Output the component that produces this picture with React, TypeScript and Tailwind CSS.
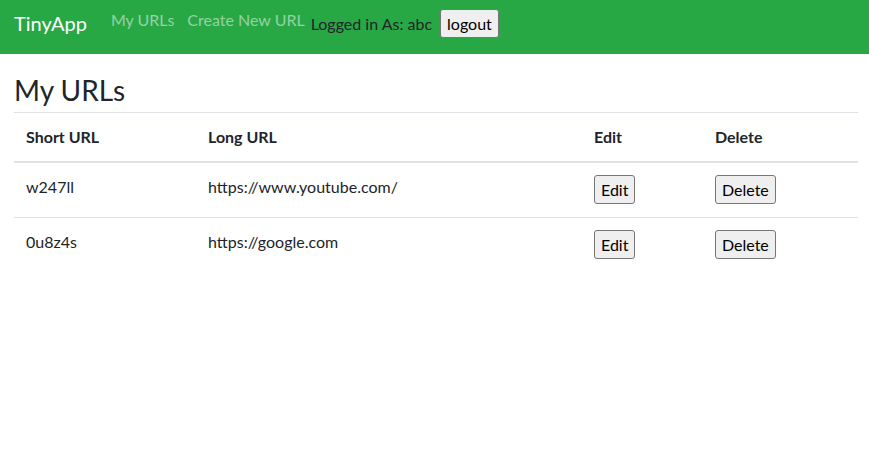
import React from "react";

const rows = [
  { short: "w247ll", long: "https://www.youtube.com/" },
  { short: "0u8z4s", long: "https://google.com" },
];

function Btn({ children }: { children: React.ReactNode }) {
  return (
    <button className="h-[29px] bg-[#efefef] border border-[#767676] rounded-[3px] px-[6px] text-base leading-6 text-black">
      {children}
    </button>
  );
}

export default function App() {
  return (
    <div className="min-h-[476px] bg-white text-[#212529] font-['Lato','Open_Sans',sans-serif] text-base">
      <nav className="h-[54px] bg-[#28a745] flex items-start pl-[14px]">
        <span className="text-[20px] leading-[30px] mt-[8px] text-white mr-[24px]">TinyApp</span>
        <a className="text-base leading-6 mt-[8px] text-white/50 mr-[13px]">My URLs</a>
        <a className="text-base leading-6 mt-[8px] text-white/50 mr-[6px]">Create New URL</a>
        <span className="text-base leading-6 mt-[12px] text-[#212529] mr-[8px]">Logged in As: abc</span>
        <div className="mt-[9px]">
          <Btn>logout</Btn>
        </div>
      </nav>
      <div className="pl-[14px] pr-[11px]">
        <h2 className="text-[28px] leading-[36px] mt-[18px] mb-[4px] font-normal">My URLs</h2>
        <table className="w-[844px] border-collapse text-left">
          <thead>
            <tr className="border-t border-[#dee2e6]">
              <th className="w-[182px] px-3 py-3 font-bold leading-6 align-bottom border-b-2 border-[#dee2e6]">Short URL</th>
              <th className="w-[386px] px-3 py-3 font-bold leading-6 align-bottom border-b-2 border-[#dee2e6]">Long URL</th>
              <th className="w-[121px] px-3 py-3 font-bold leading-6 align-bottom border-b-2 border-[#dee2e6]">Edit</th>
              <th className="px-3 py-3 font-bold leading-6 align-bottom border-b-2 border-[#dee2e6]">Delete</th>
            </tr>
          </thead>
          <tbody>
            {rows.map((r) => (
              <tr key={r.short} className="border-b border-[#dee2e6] last:border-b-0">
                <td className="px-3 pt-3 pb-[13px] align-top leading-6">{r.short}</td>
                <td className="px-3 pt-3 pb-[13px] align-top leading-6">{r.long}</td>
                <td className="px-3 pt-3 pb-[13px] align-top leading-6"><Btn>Edit</Btn></td>
                <td className="px-3 pt-3 pb-[13px] align-top leading-6"><Btn>Delete</Btn></td>
              </tr>
            ))}
          </tbody>
        </table>
      </div>
    </div>
  );
}
